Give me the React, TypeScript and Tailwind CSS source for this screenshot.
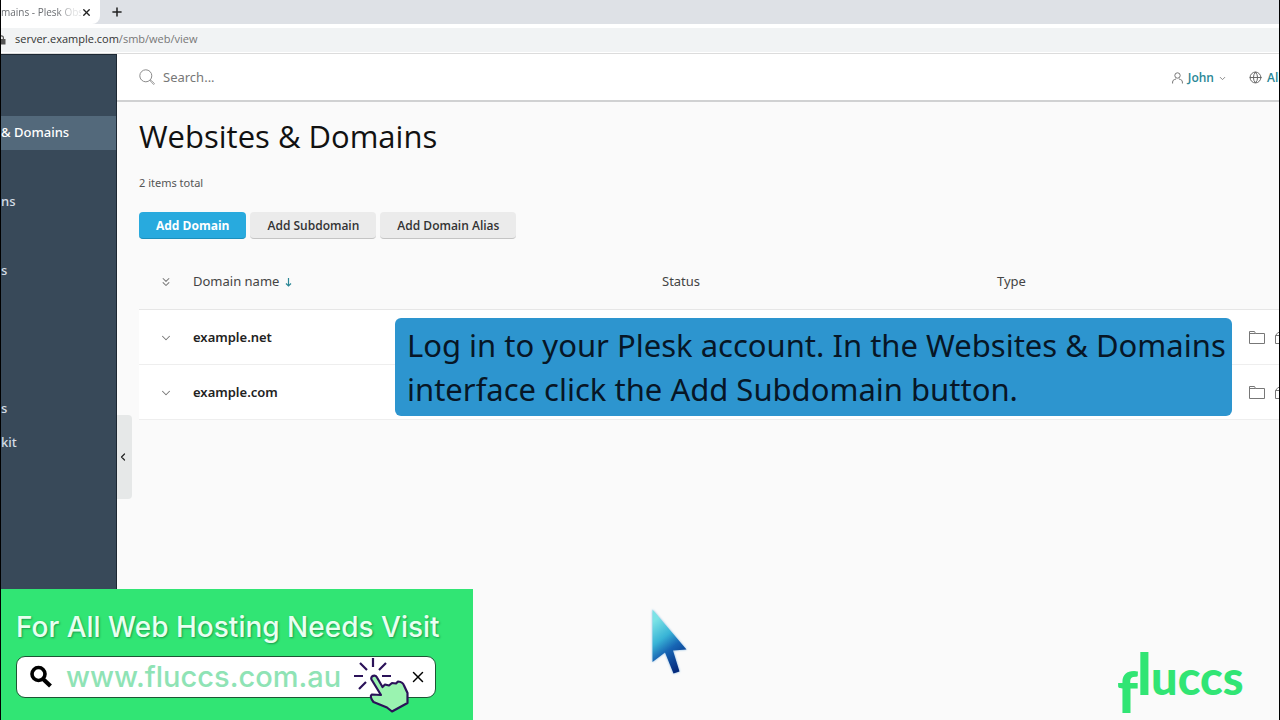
import { ChevronDown, ChevronLeft, ChevronsDown, Globe, Plus, X } from "lucide-react";

const menu = ["& Domains", "", "ns", "", "s", "", "", "", "s", "kit"];
const domains = ["example.net", "example.com"];

function BrowserBar() {
  return (
    <header className="shrink-0 bg-white font-['Open_Sans',sans-serif]">
      <div className="flex h-6 items-stretch bg-[#dee1e6]">
        <div className="flex w-[99px] items-center justify-between rounded-br-lg bg-white pr-2 text-[10px] text-[#6b6e72]">
          <span className="w-20 [mask-image:linear-gradient(to_right,black_70%,#0003_90%)] whitespace-nowrap">
            mains - Plesk Obs
          </span>
          <button aria-label="Close tab" className="text-[#222]">
            <X size={11} strokeWidth={3} />
          </button>
        </div>
        <button aria-label="New tab" className="ml-2.5 text-[#222]">
          <Plus size={14} strokeWidth={2.6} />
        </button>
      </div>
      <div className="flex h-[30px] items-center border-b border-[#dcdcdc] pt-1 pb-0.5">
        <div className="flex h-6 flex-1 items-center bg-[#f1f3f4] text-[11px]">
          <svg width="5" height="10" viewBox="0 0 5 10" className="mr-[9px]" aria-hidden="true">
            <path d="M-2 4V3a2.200 2.200 0 0 1 4.400 0V4" fill="none" stroke="#555" strokeWidth="1.200" />
            <path d="M-2 4H4.500V9.500H-2Z" fill="#555" />
          </svg>
          <span className="text-[#333]">server.example.com</span>
          <span className="text-[#777]">/smb/web/view</span>
        </div>
      </div>
    </header>
  );
}

function Sidebar() {
  return (
    <aside className="w-[116px] shrink-0 border-t border-r border-[#1d2833] bg-[#384959] pt-[61px]">
      <nav className="grid h-[344px] auto-rows-fr overflow-hidden text-[13px] font-medium text-[#d5dde5]">
        {menu.map((label, i) =>
          label ? (
            <a key={i} href="#" className={i === 0 ? "flex items-center bg-[#53697b] text-white" : "flex items-center"}>
              {label}
            </a>
          ) : (
            <span key={i} />
          ),
        )}
      </nav>
    </aside>
  );
}

function TopBar() {
  return (
    <div className="flex h-12 shrink-0 items-center justify-between border-b-2 border-[#d0d1d2] bg-white pl-[22px]">
      <div className="flex items-center gap-2">
        <svg width="16" height="16" viewBox="0 0 16 16" fill="none" stroke="#8b8b8b" aria-hidden="true">
          <circle cx="6.800" cy="6.800" r="6" />
          <path d="M11 11.200 12 12.200" />
          <path d="M12.300 11.500 15.200 14.200a.7.7 0 0 1-1 1L11.600 12.200Z" strokeWidth="0.800" />
        </svg>
        <input
          aria-label="Search"
          placeholder="Search..."
          className="w-40 bg-transparent pt-px text-[13px] outline-none placeholder:text-[#777]"
        />
      </div>
      <div className="flex items-center pt-px font-['Open_Sans',sans-serif] text-[12px] font-semibold text-[#2a8796]">
        <button className="flex items-center">
          <svg width="11" height="12" viewBox="0 0 11 12" fill="none" stroke="#777" className="mr-[5px]" aria-hidden="true">
            <circle cx="5.500" cy="3.500" r="2.700" />
            <path d="M.6 11.500V10q0-2 2-2.500l1.500-.6M10.400 11.500V10q0-2-2-2.500l-1.500-.6" />
          </svg>
          John
          <ChevronDown size={9} strokeWidth={2.6} className="mt-0.5 ml-1 text-[#888]" />
        </button>
        <button className="ml-[22px] flex w-[30px] items-center gap-[5px] whitespace-nowrap">
          <Globe size={13} strokeWidth={1.8} className="shrink-0 text-[#666]" />
          All
        </button>
      </div>
    </div>
  );
}

function FolderIcon() {
  return (
    <svg width="16" height="13" viewBox="0 0 16 13" fill="none" stroke="#777" className="shrink-0" aria-hidden="true">
      <path d="M.5 12.500V.5H5.500L6.500 2.500H15.500V12.500ZM.5 2.500H6.500" />
    </svg>
  );
}

function DatabaseIcon() {
  return (
    <svg width="12" height="13" viewBox="0 0 12 13" fill="none" stroke="#777" className="shrink-0" aria-hidden="true">
      <path d="M.5 4.500 3 1.500H11.500V12.500H.5ZM.5 4.500H11.500" />
    </svg>
  );
}

function DomainsTable() {
  return (
    <table className="w-full table-fixed border-collapse text-left text-[#222] [&_td]:pt-0.5 [&_th]:pt-0.5">
      <colgroup>
        <col className="w-[54px]" />
        <col />
        <col className="w-[335px]" />
        <col className="w-[252px]" />
        <col className="w-[30px]" />
      </colgroup>
      <thead>
        <tr className="h-14 border-b border-[#e6e6e6] text-[13px] text-[#444]">
          <th className="pl-5">
            <ChevronsDown size={14} strokeWidth={1.8} className="text-[#777]" />
          </th>
          <th className="font-normal">
            Domain name
            <svg
              width="7"
              height="9"
              viewBox="0 0 7 9"
              fill="none"
              stroke="#2a8796"
              strokeWidth="1.200"
              className="ml-1.5 inline-block"
              aria-hidden="true"
            >
              <path d="M3.500 0V8M1 5.500 3.500 8 6 5.500" />
            </svg>
          </th>
          <th className="font-normal">Status</th>
          <th className="font-normal">Type</th>
          <th />
        </tr>
      </thead>
      <tbody>
        {domains.map((name) => (
          <tr key={name} className="h-[55px] border-b border-[#eeeeee] bg-white">
            <td className="pl-5">
              <button aria-label={`Expand ${name}`} className="block">
                <ChevronDown size={14} strokeWidth={1.800} className="text-[#777]" />
              </button>
            </td>
            <td className="text-[13px] font-semibold">{name}</td>
            <td />
            <td />
            <td>
              <div className="flex items-center gap-2.5">
                <FolderIcon />
                <DatabaseIcon />
              </div>
            </td>
          </tr>
        ))}
      </tbody>
    </table>
  );
}

function Banner() {
  return (
    <section className="absolute bottom-0 left-0 h-[131px] w-[472px] bg-[#31e574] pt-5 pl-[15px] font-['Inter',sans-serif]">
      <p className="text-[28px] leading-9 font-medium whitespace-nowrap text-[#e8fff0] [text-shadow:1px_1px_2px_#1a9c4c]">
        For All Web Hosting Needs Visit
      </p>
      <div className="mt-[11px] flex h-[42px] w-[420px] items-center rounded-[9px] border border-[#1c5634] bg-white pl-3">
        <svg width="24" height="24" viewBox="0 0 24 24" fill="none" stroke="#000" aria-hidden="true">
          <circle cx="9.500" cy="9" r="6.500" strokeWidth="3.600" />
          <path d="M14 14 21.500 21" strokeWidth="4.200" />
        </svg>
        <a href="#" className="ml-[13px] text-[29px] font-medium text-[#8fe3b5]">
          www.fluccs.com.au
        </a>
        <button aria-label="Clear" className="mr-2 ml-auto text-black">
          <X size={18} strokeWidth={2} />
        </button>
      </div>
      <svg
        width="58"
        height="56"
        viewBox="0 0 58 56"
        fill="none"
        stroke="#2b1259"
        strokeWidth="2.200"
        className="absolute top-[68px] left-[352px]"
        aria-hidden="true"
      >
        <path d="M20 1V10M7 6 14 13M33 6 26 13M1 19H10M29 19H38M6 32 13 25" />
        <path
          d="M18.500 22.500C17 19 22.500 17 24 20.500L29.500 30 32 27.500 36 28.500 39 26 43 26.500 45 24.500Q50 25 51 28.500L54.500 36V46L39 54.500 34 50.500 20.500 45Q16 39 19 37.500L28 38Z"
          fill="#9af3b0"
          strokeLinejoin="round"
        />
      </svg>
    </section>
  );
}

function Pointer() {
  return (
    <svg
      width="40"
      height="70"
      viewBox="0 0 40 70"
      className="absolute top-[606px] left-[648px] drop-shadow-[0_0_1px_#7fb4e0]"
      aria-hidden="true"
    >
      <defs>
        <linearGradient id="pointer" x1="0.200" y1="0" x2="0.600" y2="1">
          <stop offset="0.100" stopColor="#7be3e6" />
          <stop offset="0.420" stopColor="#38b3d6" />
          <stop offset="0.640" stopColor="#1765b4" />
          <stop offset="1" stopColor="#042a7c" />
        </linearGradient>
      </defs>
      <path d="M3.500 3.500 37.500 43.500 24 44.500 30.500 65.500 24.500 67.500 16 46.500 3.500 56Z" fill="url(#pointer)" />
    </svg>
  );
}

function Logo() {
  return (
    <svg
      width="128"
      height="68"
      viewBox="0 0 128 68"
      className="absolute right-[34px] bottom-[3px] overflow-visible font-['Lato',sans-serif] font-black"
      fill="#31e574"
      role="img"
      aria-label="fluccs"
    >
      <text x="0" y="64" fontSize="58">f</text>
      <text x="20" y="46" fontSize="58">l</text>
      <text x="34" y="46" fontSize="47">uccs</text>
    </svg>
  );
}

export default function App() {
  return (
    <div className="relative flex min-h-screen flex-col overflow-hidden border-x border-black bg-[#fafafa] font-['Noto_Sans',sans-serif]">
      <BrowserBar />
      <div className="flex flex-1">
        <Sidebar />
        <div className="relative flex min-w-0 flex-1 flex-col">
          <TopBar />
          <main className="pt-3.5 pl-[22px]">
            <h1 className="font-['Open_Sans',sans-serif] text-[31px] leading-10 text-[#111]">Websites &amp; Domains</h1>
            <p className="mt-[17px] text-[11px] leading-5 text-[#555]">2 items total</p>
            <div className="mt-[19px] mb-3.5 flex gap-1 font-['Open_Sans',sans-serif] text-[12px] font-semibold text-[#333]">
              <button className="h-[27px] rounded-sm border-b border-[#1b8fbc] bg-[#28aade] px-[17px] pt-0.5 font-bold text-white">
                Add Domain
              </button>
              <button className="h-[27px] rounded-sm border-b border-[#c4c4c4] bg-[#ebebeb] px-[17px] pt-0.5">
                Add Subdomain
              </button>
              <button className="h-[27px] rounded-sm border-b border-[#c4c4c4] bg-[#ebebeb] px-[17px] pt-0.5">
                Add Domain Alias
              </button>
            </div>
            <DomainsTable />
          </main>
          <button
            aria-label="Collapse sidebar"
            className="absolute top-[361px] left-0 flex h-[84px] w-[15px] items-center rounded-r-sm bg-[#e6e8e8] text-[#222]"
          >
            <ChevronLeft size={12} strokeWidth={2.400} />
          </button>
        </div>
      </div>
      <p className="absolute top-[318px] right-[47px] left-[394px] rounded-md bg-[#2d95cf] py-[5px] pl-3 text-[31px] leading-[44px] whitespace-nowrap text-[#071626]">
        Log in to your Plesk account. In the Websites &amp; Domains
        <br />
        interface click the Add Subdomain button.
      </p>
      <Banner />
      <Pointer />
      <Logo />
    </div>
  );
}
